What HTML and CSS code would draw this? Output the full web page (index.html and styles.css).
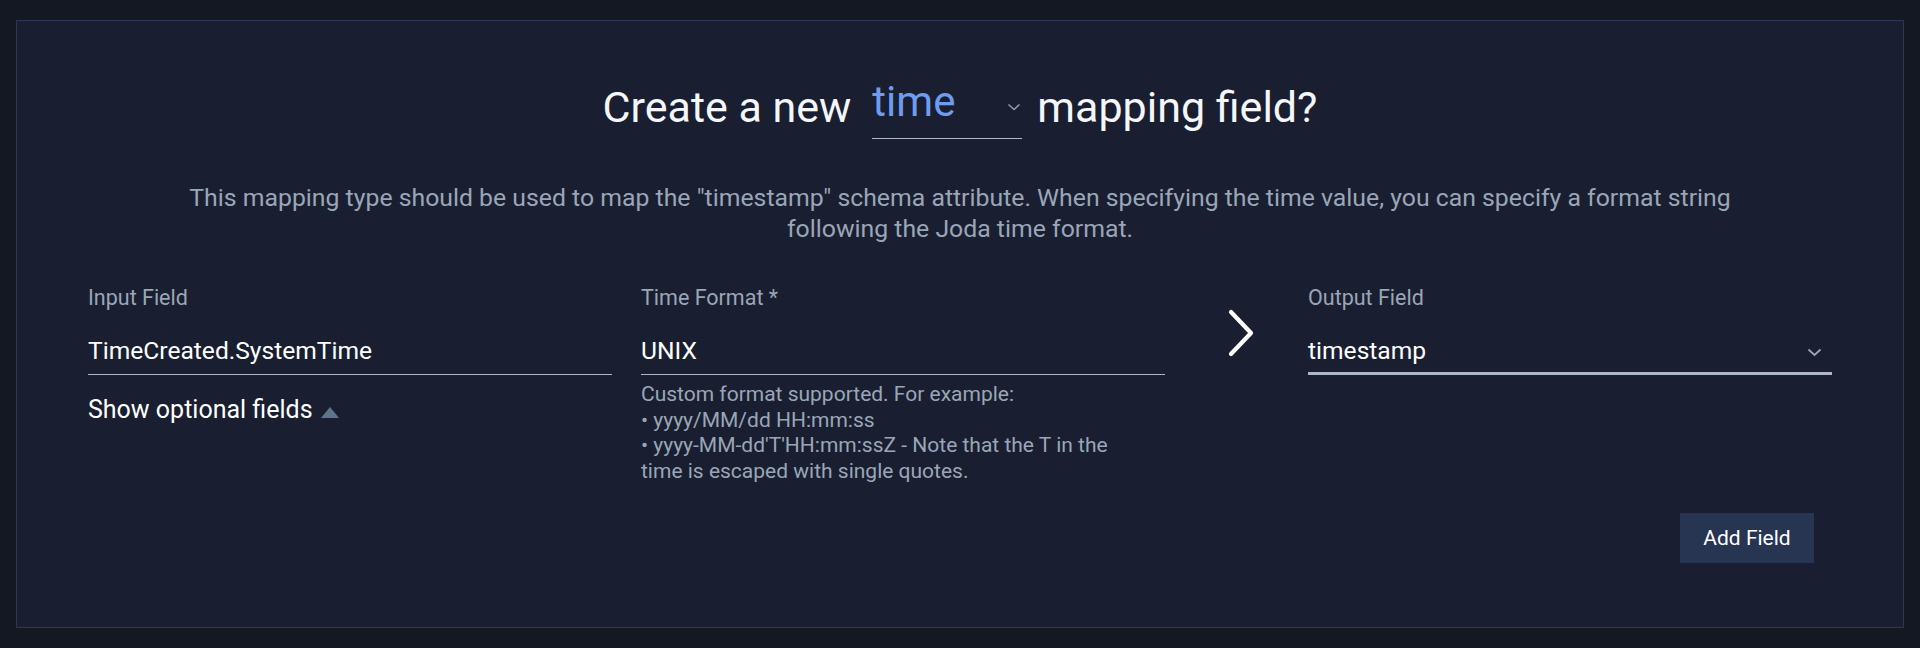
FILE: index.html
```html
<!DOCTYPE html>
<html lang="en">
<head>
<meta charset="utf-8">
<title>Create mapping field</title>
<link rel="stylesheet" href="styles.css">
</head>
<body>
<div class="page">
  <section class="panel">
    <h1 class="title">
      <span class="title-text">Create a new</span>
      <span class="type-select">
        <span class="type-value">time</span>
        <svg class="type-chevron" width="14" height="8" viewBox="0 0 14 8"><path d="M1.5 1.5 L7 6.5 L12.5 1.5" fill="none" stroke="#8d9aab" stroke-width="1.6"/></svg>
      </span>
      <span class="title-text">mapping field?</span>
    </h1>
    <p class="description">This mapping type should be used to map the "timestamp" schema attribute. When specifying the time value, you can specify a format string following the Joda time format.</p>

    <div class="fields">
      <div class="field">
        <div class="field-label">Input Field</div>
        <div class="field-input">TimeCreated.SystemTime</div>
        <div class="optional-toggle">Show optional fields<svg class="toggle-caret" width="18" height="11" viewBox="0 0 18 11"><path d="M9 0 L18 11 L0 11 Z" fill="#5f738c"/></svg></div>
      </div>
      <div class="field">
        <div class="field-label">Time Format *</div>
        <div class="field-input">UNIX</div>
        <div class="helper">Custom format supported. For example:<br>• yyyy/MM/dd HH:mm:ss<br>• yyyy-MM-dd'T'HH:mm:ssZ - Note that the T in the time is escaped with single quotes.</div>
      </div>
      <div class="arrow">
        <svg width="28" height="48" viewBox="0 0 28 48"><path d="M4 3 L24 24 L4 45" fill="none" stroke="#ffffff" stroke-width="4.2" stroke-linecap="round" stroke-linejoin="round"/></svg>
      </div>
      <div class="field">
        <div class="field-label">Output Field</div>
        <div class="field-input field-select">
          <span>timestamp</span>
          <svg class="select-chevron" width="15" height="9" viewBox="0 0 15 9"><path d="M1.5 1.5 L7.5 7 L13.5 1.5" fill="none" stroke="#9aa7b8" stroke-width="1.8"/></svg>
        </div>
      </div>
    </div>

    <div class="actions">
      <button class="add-button" type="button">Add Field</button>
    </div>
  </section>
</div>
</body>
</html>
```

FILE: styles.css
```css
* {
  box-sizing: border-box;
}

html, body {
  margin: 0;
  padding: 0;
  background: #131823;
  font-family: Roboto, "Liberation Sans", Arial, sans-serif;
}

.page {
  padding: 20px 16px;
  height: 648px;
}

.panel {
  background: #191f30;
  border: 1px solid #2b3955;
  height: 608px;
  padding: 61px 71px 0 71px;
}

.title {
  display: flex;
  justify-content: center;
  align-items: flex-start;
  margin: 0;
  font-size: 43px;
  font-weight: 400;
  line-height: 50px;
  color: #f4f6f9;
}

.type-select {
  display: flex;
  align-items: flex-start;
  width: 150px;
  margin: -5px 15px 0 21px;
  padding-bottom: 11px;
  border-bottom: 1px solid #aab8c8;
}

.type-value {
  color: #6f9cef;
  font-size: 42px;
  flex: 1;
}

.type-chevron {
  margin-top: 26px;
  margin-right: 1px;
}

.description {
  max-width: 1580px;
  margin: 43px auto 0 auto;
  text-align: center;
  font-size: 24.8px;
  line-height: 31px;
  color: #9aa6b7;
}

.fields {
  display: grid;
  grid-template-columns: 1fr 1fr 85px 1fr;
  column-gap: 29px;
  margin-top: 42px;
}

.field-label {
  font-size: 21.5px;
  line-height: 24px;
  color: #9aa6b7;
}

.field-input {
  margin-top: 27px;
  font-size: 24.6px;
  line-height: 28px;
  color: #ffffff;
  padding-bottom: 9px;
  border-bottom: 1px solid #aab8c8;
}

.field-select {
  display: flex;
  align-items: center;
  justify-content: space-between;
  padding-bottom: 7px;
  border-bottom: 3px solid #aab8c8;
}

.select-chevron {
  margin-right: 10px;
  margin-top: 3px;
}

.optional-toggle {
  margin-top: 21px;
  font-size: 25px;
  line-height: 28px;
  color: #ffffff;
  display: flex;
  align-items: flex-start;
}

.toggle-caret {
  margin-left: 8px;
  margin-top: 11px;
}

.helper {
  margin-top: 7px;
  font-size: 21px;
  line-height: 25.5px;
  color: #9aa6b7;
  padding-right: 16px;
}

.arrow {
  display: flex;
  justify-content: center;
  padding-top: 23px;
  padding-left: 8px;
}

.actions {
  display: flex;
  justify-content: flex-end;
  margin-top: 29px;
  padding-right: 18px;
}

.add-button {
  width: 134px;
  height: 50px;
  border: none;
  background: #273452;
  color: #ffffff;
  font-family: Roboto, "Liberation Sans", Arial, sans-serif;
  font-size: 21px;
  padding: 0;
}
```
